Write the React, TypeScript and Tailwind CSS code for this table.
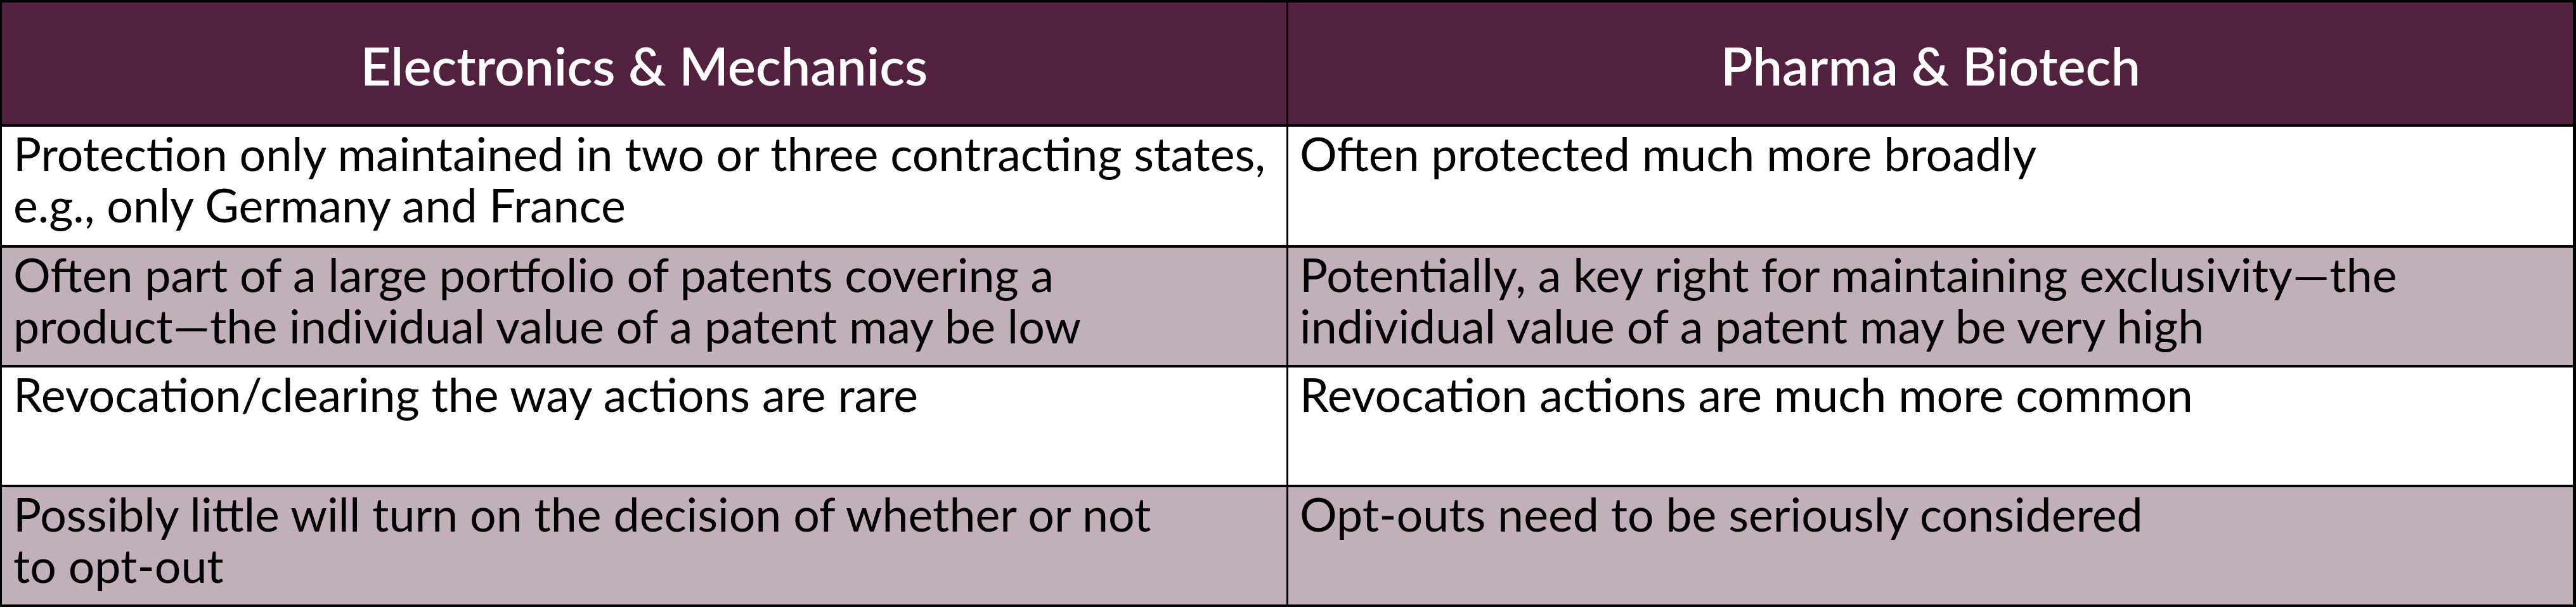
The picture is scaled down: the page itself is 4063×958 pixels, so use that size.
import React from 'react';

type Row = {
  left: React.ReactNode;
  right: React.ReactNode;
  shaded: boolean;
};

const rows: Row[] = [
  {
    left: (
      <>
        Protection only maintained in two or three contracting states,
        <br />
        e.g., only Germany and France
      </>
    ),
    right: 'Often protected much more broadly',
    shaded: false,
  },
  {
    left: (
      <>
        Often part of a large portfolio of patents covering a
        <br />
        product—the individual value of a patent may be low
      </>
    ),
    right: (
      <>
        Potentially, a key right for maintaining exclusivity—the
        <br />
        individual value of a patent may be very high
      </>
    ),
    shaded: true,
  },
  {
    left: 'Revocation/clearing the way actions are rare',
    right: 'Revocation actions are much more common',
    shaded: false,
  },
  {
    left: (
      <>
        Possibly little will turn on the decision of whether or not
        <br />
        to opt-out
      </>
    ),
    right: 'Opt-outs need to be seriously considered',
    shaded: true,
  },
];

export default function App() {
  return (
    <div className="h-[958px] w-[4063px] bg-white font-['Lato','Liberation_Sans',sans-serif]">
      <div className="flex h-full w-full flex-col gap-y-[4px] border-t-[4px] border-r-[5px] border-b-[4px] border-l-[3px] border-black bg-black">
        {/* header */}
        <div className="grid h-[192px] grid-cols-2 gap-x-[3px]">
          <div className="flex items-center justify-center bg-[#52213f] pt-[6px] text-[83px] font-semibold text-white">
            Electronics &amp; Mechanics
          </div>
          <div className="flex items-center justify-center bg-[#52213f] pt-[6px] text-[83px] font-semibold text-white">
            Pharma &amp; Biotech
          </div>
        </div>

        {rows.map((row, i) => (
          <div
            key={i}
            className={`grid grid-cols-2 gap-x-[3px] ${i === 0 ? 'h-[187px]' : 'h-[185px]'}`}
          >
            <div
              className={`pt-[1px] pl-[18px] text-[73.5px] leading-[81px] whitespace-nowrap text-black ${
                row.shaded ? 'bg-[#c1afb9]' : 'bg-white'
              }`}
            >
              {row.left}
            </div>
            <div
              className={`pt-[1px] pl-[18px] text-[73.5px] leading-[81px] whitespace-nowrap text-black ${
                row.shaded ? 'bg-[#c1afb9]' : 'bg-white'
              }`}
            >
              {row.right}
            </div>
          </div>
        ))}
      </div>
    </div>
  );
}
